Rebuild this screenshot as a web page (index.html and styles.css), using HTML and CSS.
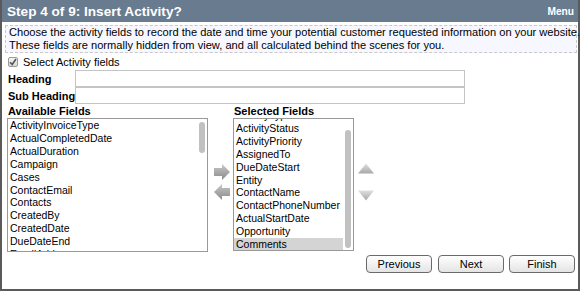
FILE: index.html
```html
<!DOCTYPE html>
<html>
<head>
<meta charset="utf-8">
<link rel="stylesheet" href="styles.css">
</head>
<body>
<div class="panel">
  <div class="titlebar">
    <span class="title">Step 4 of 9: Insert Activity?</span>
    <span class="menu">Menu</span>
  </div>
  <div class="content">
    <div class="info">Choose the activity fields to record the date and time your potential customer requested information on your website.<br>These fields are normally hidden from view, and all calculated behind the scenes for you.</div>
    <label class="check"><span class="box"><svg width="8" height="8" viewBox="0 0 8 8"><path d="M1 4.2 L3.2 6.5 L7 1" fill="none" stroke="#555" stroke-width="1.6"/></svg></span>Select Activity fields</label>
    <div class="row first"><span class="lbl">Heading</span><span class="input"></span></div>
    <div class="row"><span class="lbl">Sub Heading</span><span class="input"></span></div>
    <div class="lists">
      <div class="col">
        <div class="lbl">Available Fields</div>
        <div class="list avail">
          <div class="items">
            <div>ActivityInvoiceType</div>
            <div>ActualCompletedDate</div>
            <div>ActualDuration</div>
            <div>Campaign</div>
            <div>Cases</div>
            <div>ContactEmail</div>
            <div>Contacts</div>
            <div>CreatedBy</div>
            <div>CreatedDate</div>
            <div>DueDateEnd</div>
            <div>EmailAddress</div>
          </div>
          <div class="track"><div class="thumb t1"></div></div>
        </div>
      </div>
      <div class="moves">
        <svg width="18" height="17" viewBox="0 0 18 17"><defs><linearGradient id="g1" x1="0" y1="0" x2="0" y2="1"><stop offset="0" stop-color="#c8c8c8"/><stop offset="1" stop-color="#8a8a8a"/></linearGradient></defs><path d="M1 4 H9 V0 L17 8 L9 16 V12 H1 Z" fill="url(#g1)"/></svg>
        <svg width="18" height="17" viewBox="0 0 18 17"><path d="M17 4 H9 V0 L1 8 L9 16 V12 H17 Z" fill="url(#g1)"/></svg>
      </div>
      <div class="col">
        <div class="lbl">Selected Fields</div>
        <div class="list sel">
          <div class="items shifted">
            <div>ActivityType</div>
            <div>ActivityStatus</div>
            <div>ActivityPriority</div>
            <div>AssignedTo</div>
            <div>DueDateStart</div>
            <div>Entity</div>
            <div>ContactName</div>
            <div>ContactPhoneNumber</div>
            <div>ActualStartDate</div>
            <div>Opportunity</div>
            <div class="on">Comments</div>
          </div>
          <div class="track"><div class="thumb t2"></div></div>
        </div>
      </div>
      <div class="order">
        <svg width="18" height="11" viewBox="0 0 18 11"><defs><linearGradient id="g2" x1="0" y1="0" x2="0" y2="1"><stop offset="0" stop-color="#e0e0e0"/><stop offset="1" stop-color="#a8a8a8"/></linearGradient></defs><path d="M9 0.5 L17 10.5 H1 Z" fill="url(#g2)"/></svg>
        <svg width="18" height="11" viewBox="0 0 18 11"><path d="M1 0.5 H17 L9 10.5 Z" fill="url(#g2)"/></svg>
      </div>
    </div>
    <div class="buttons">
      <span class="btn">Previous</span>
      <span class="btn">Next</span>
      <span class="btn">Finish</span>
    </div>
  </div>
</div>
</body>
</html>
```
FILE: styles.css
```css
html, body { margin: 0; padding: 0; background: #fff; }
body { font-family: "Liberation Sans", Arial, sans-serif; font-size: 11px; color: #000; }
.panel {
  width: 576px; height: 289px;
  border: 2px solid #5a5a5a; border-top: 0;
  display: flex; flex-direction: column;
}
.titlebar {
  height: 22px; flex: none; background: #687b8f;
  display: flex; align-items: center; justify-content: space-between;
  padding: 0 4px 0 5px; color: #fff;
}
.title { font-weight: bold; font-size: 13.6px; }
.menu { font-weight: bold; font-size: 10.2px; }
.content { padding: 3px 1px 0 3px; display: flex; flex-direction: column; }
.info {
  border: 1px dashed #c8c8c8; background: #f7f8ff;
  padding: 0 2px 0 3px; line-height: 13px; font-size: 11.1px;
  white-space: nowrap;
}
.check { display: flex; align-items: center; margin: 2px 0 0 3px; height: 13px; font-size: 11px; }
.box {
  width: 8px; height: 8px; border: 1px solid #9a9a9a; border-radius: 2px;
  background: linear-gradient(#f4f4f4, #d8d8d8);
  display: inline-flex; align-items: center; justify-content: center;
  margin-right: 5px;
}
.row { display: flex; align-items: center; height: 17px; }
.row.first { margin-top: 2px; }
.lbl { font-weight: bold; font-size: 11px; margin-left: 3px; white-space: nowrap; }
.row .lbl { width: 67px; flex: none; }
.input { width: 388px; height: 15px; border: 1px solid #c4c4c4; }
.lists { display: flex; margin-top: 1px; }
.col .lbl { height: 13px; line-height: 13px; }
.list {
  border: 1px solid #999; position: relative; overflow: hidden;
  background: #fff; display: flex;
}
.avail { width: 199px; height: 132px; margin-left: 2px; }
.sel { width: 119px; height: 131px; margin-left: 0; }
.sel + * { }
.col:nth-of-type(3) .lbl { margin-left: 1px; }
.items { flex: 1; font-size: 10.5px; line-height: 12.9px; min-width: 0; }
.items div { padding-left: 2px; white-space: nowrap; overflow: hidden; }
.shifted { margin-top: -10px; }
.items .on { background: #d4d4d4; }
.track { width: 10px; flex: none; position: relative; }
.thumb { position: absolute; left: 2px; width: 6px; background: #c1c1c1; border-radius: 3px; }
.t1 { top: 3px; height: 31px; }
.t2 { top: 11px; height: 118px; }
.moves {
  width: 25px; flex: none; display: flex; flex-direction: column;
  align-items: center; padding-top: 59px; gap: 3px;
}
.moves svg { margin-left: 3px; }
.order {
  display: flex; flex-direction: column; padding-top: 58px; gap: 16px; margin-left: 3px;
}
.buttons { display: flex; justify-content: flex-end; gap: 5px; margin-top: 3px; padding-right: 2px; }
.btn {
  width: 64px; height: 16px; border: 1px solid #6a6a6a; border-radius: 4px;
  background: linear-gradient(#ffffff, #e4e4e4);
  display: flex; align-items: center; justify-content: center; font-size: 11px;
}
.btn:first-child { margin-right: 1px; }
```
